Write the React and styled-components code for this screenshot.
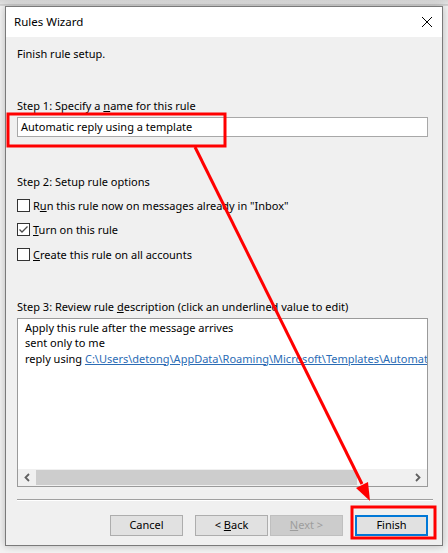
import React from 'react';
import styled, { createGlobalStyle } from 'styled-components';

const GlobalStyle = createGlobalStyle`
  html, body {
    margin: 0;
    padding: 0;
    width: 448px;
    height: 553px;
    overflow: hidden;
    background: #f3f3f3;
  }
  * {
    box-sizing: border-box;
  }
`;

const Page = styled.div`
  position: relative;
  width: 448px;
  height: 553px;
  padding: 6px 0 0 5px;
  background:
    linear-gradient(to bottom, #d6d6d6 0, #e4e4e4 4px, #b9b9b9 5px, #f3f3f3 6px),
    #f3f3f3;
  background-repeat: no-repeat;
  background-size: 100% 6px, auto;
  font-family: 'Noto Sans', 'Open Sans', sans-serif;
  font-size: 11px;
  color: #000;
`;

const Dialog = styled.div`
  width: 438px;
  height: 540px;
  border: 1px solid #7a7a7a;
  background: #f0f0f0;
  display: flex;
  flex-direction: column;
  box-shadow: 0 0 8px rgba(0, 0, 0, 0.25);
`;

const TitleBar = styled.div`
  height: 30px;
  flex: none;
  background: #fff;
  display: flex;
  align-items: center;
  justify-content: space-between;
  padding: 0 9px 0 8px;
`;

const Title = styled.span`
  font-size: 11.5px;
  padding-bottom: 1px;
`;

const Body = styled.div`
  flex: 1;
  display: flex;
  flex-direction: column;
  padding: 0 10px 0 11px;
`;

const Label = styled.div`
  line-height: 16px;
  height: 16px;
  white-space: nowrap;
  margin-top: ${(p) => p.$top || 0}px;
`;

const TextInput = styled.div`
  margin-top: 3px;
  width: 411px;
  height: 20px;
  border: 1px solid #a8a8a8;
  background: #fff;
  padding: 0 3px;
  line-height: 18px;
  white-space: nowrap;
`;

const OptionList = styled.div`
  display: flex;
  flex-direction: column;
  margin-top: 3px;
`;

const Option = styled.label`
  display: flex;
  align-items: center;
  gap: 3px;
  height: 24.5px;
  white-space: nowrap;
`;

const Box = styled.span`
  width: 13px;
  height: 13px;
  flex: none;
  border: 1px solid #333;
  background: #fff;
  display: flex;
  align-items: center;
  justify-content: center;
`;

const Description = styled.div`
  margin-top: 3px;
  width: 411px;
  height: 169px;
  border: 1px solid #9a9a9a;
  background: #fff;
  display: flex;
  flex-direction: column;
`;

const DescText = styled.div`
  flex: 1;
  overflow: hidden;
  padding: 1px 0 0 7px;
  line-height: 15.5px;
  white-space: nowrap;
`;

const Link = styled.span`
  color: #2b6cb5;
  text-decoration: underline;
`;

const HScroll = styled.div`
  height: 17px;
  flex: none;
  display: flex;
  align-items: stretch;
  background: #f0f0f0;
`;

const ScrollArrow = styled.span`
  width: 18px;
  flex: none;
  display: flex;
  align-items: center;
  justify-content: center;
`;

const ScrollTrack = styled.div`
  flex: 1;
  display: flex;
  padding: 1px 0;
`;

const Thumb = styled.div`
  background: #cdcdcd;
  height: 100%;
`;

const Separator = styled.div`
  margin-top: 12px;
  width: 416px;
  height: 2px;
  border-top: 1px solid #a0a0a0;
  border-bottom: 1px solid #fff;
`;

const Footer = styled.div`
  display: flex;
  justify-content: flex-end;
  gap: 12px;
  margin-top: 14px;
  padding-right: 4px;
`;

const ButtonPair = styled.div`
  display: flex;
  gap: 2px;
`;

const Button = styled.button`
  width: 73px;
  height: 21px;
  padding: 0 0 1px;
  font-family: inherit;
  font-size: 11px;
  color: ${(p) => (p.disabled ? '#9d9d9d' : '#000')};
  background: ${(p) => (p.disabled ? '#cccccc' : '#e1e1e1')};
  border: ${(p) => (p.$default ? '2px solid #0078d7' : p.disabled ? '1px solid #bfbfbf' : '1px solid #adadad')};
`;

const Overlay = styled.svg`
  position: absolute;
  left: 0;
  top: 0;
  pointer-events: none;
`;

const CloseIcon = () => (
  <svg width="12" height="12" viewBox="0 0 12 12">
    <path d="M1 1 L11 11 M11 1 L1 11" stroke="#000" strokeWidth="1" fill="none" />
  </svg>
);

const Check = () => (
  <svg width="11" height="11" viewBox="0 0 11 11">
    <path d="M1.5 5.5 L4 8 L9.5 2.5" stroke="#4a4a4a" strokeWidth="1.3" fill="none" />
  </svg>
);

const Chevron = ({ dir }) => (
  <svg width="8" height="9" viewBox="0 0 8 9">
    <path
      d={dir === 'left' ? 'M6 1 L2.5 4.5 L6 8' : 'M2 1 L5.5 4.5 L2 8'}
      stroke="#606060"
      strokeWidth="1.8"
      fill="none"
    />
  </svg>
);

const options = [
  { label: <>R<u>u</u>n this rule now on messages already in "Inbox"</>, checked: false },
  { label: <><u>T</u>urn on this rule</>, checked: true },
  { label: <><u>C</u>reate this rule on all accounts</>, checked: false },
];

export default function App() {
  return (
    <>
      <GlobalStyle />
      <Page>
        <Dialog>
          <TitleBar>
            <Title>Rules Wizard</Title>
            <CloseIcon />
          </TitleBar>
          <Body>
            <Label $top={9}>Finish rule setup.</Label>
            <Label $top={36}>Step 1: Specify a <u>n</u>ame for this rule</Label>
            <TextInput>Automatic reply using a template</TextInput>
            <Label $top={37}>Step 2: Setup rule options</Label>
            <OptionList>
              {options.map((o, i) => (
                <Option key={i}>
                  <Box>{o.checked && <Check />}</Box>
                  <span>{o.label}</span>
                </Option>
              ))}
            </OptionList>
            <Label $top={32}>Step 3: Review rule <u>d</u>escription (click an underlined value to edit)</Label>
            <Description>
              <DescText>
                <div>Apply this rule after the message arrives</div>
                <div>sent only to me</div>
                <div>
                  reply using <Link>C:\Users\detong\AppData\Roaming\Microsoft\Templates\Automatic reply.oft</Link>
                </div>
              </DescText>
              <HScroll>
                <ScrollArrow><Chevron dir="left" /></ScrollArrow>
                <ScrollTrack>
                  <Thumb style={{ width: `${(321 / 373) * 100}%` }} />
                </ScrollTrack>
                <ScrollArrow><Chevron dir="right" /></ScrollArrow>
              </HScroll>
            </Description>
            <Separator />
            <Footer>
              <Button>Cancel</Button>
              <ButtonPair>
                <Button>&lt; <u>B</u>ack</Button>
                <Button disabled><u>N</u>ext &gt;</Button>
              </ButtonPair>
              <Button $default>Finish</Button>
            </Footer>
          </Body>
        </Dialog>
        <Overlay width="448" height="553" viewBox="0 0 448 553">
          <rect x="8" y="114" width="217" height="32" fill="none" stroke="#f00" strokeWidth="3" />
          <rect x="352" y="507" width="83" height="31" fill="none" stroke="#f00" strokeWidth="3" />
          <line x1="195" y1="147" x2="362" y2="484" stroke="#f00" strokeWidth="3" />
          <polygon points="370,501 356,488 368,482" fill="#f00" />
        </Overlay>
      </Page>
    </>
  );
}
